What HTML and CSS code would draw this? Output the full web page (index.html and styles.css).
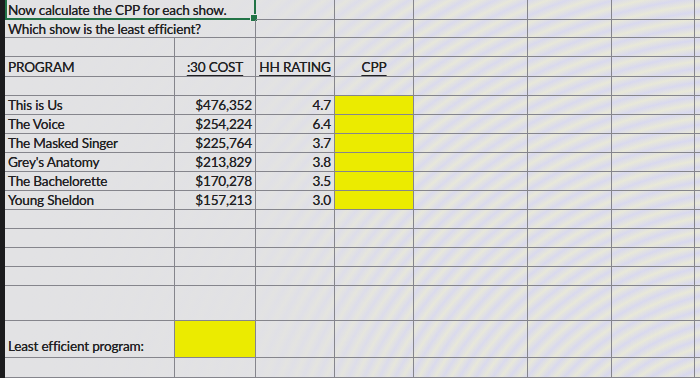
FILE: index.html
```html
<!DOCTYPE html>
<html>
<head>
<meta charset="utf-8">
<link rel="stylesheet" href="styles.css">
</head>
<body>
<div class="screen">
  <div class="edge"></div>
  <div class="sheet">
    <div class="row r1">
      <div class="span2 sel">Now calculate the CPP for each show.<span class="handle"></span></div>
      <div></div><div></div><div></div><div></div><div></div><div></div>
    </div>
    <div class="row r2">
      <div class="span2">Which show is the least efficient?</div>
      <div></div><div></div><div></div><div></div><div></div><div></div>
    </div>
    <div class="row r3"><div></div><div></div><div></div><div></div><div></div><div></div><div></div><div></div></div>
    <div class="row r4 head">
      <div>PROGRAM</div>
      <div class="ctr"><u>:30 COST</u></div>
      <div class="ctr"><u>HH RATING</u></div>
      <div class="ctr"><u>CPP</u></div>
      <div></div><div></div><div></div><div></div>
    </div>
    <div class="row r5"><div></div><div></div><div></div><div></div><div></div><div></div><div></div><div></div></div>
    <div class="row data"><div>This is Us</div><div class="num">$476,352</div><div class="num">4.7</div><div class="yel"></div><div></div><div></div><div></div><div></div></div>
    <div class="row data"><div>The Voice</div><div class="num">$254,224</div><div class="num">6.4</div><div class="yel"></div><div></div><div></div><div></div><div></div></div>
    <div class="row data"><div>The Masked Singer</div><div class="num">$225,764</div><div class="num">3.7</div><div class="yel"></div><div></div><div></div><div></div><div></div></div>
    <div class="row data"><div>Grey's Anatomy</div><div class="num">$213,829</div><div class="num">3.8</div><div class="yel"></div><div></div><div></div><div></div><div></div></div>
    <div class="row data"><div>The Bachelorette</div><div class="num">$170,278</div><div class="num">3.5</div><div class="yel"></div><div></div><div></div><div></div><div></div></div>
    <div class="row data"><div>Young Sheldon</div><div class="num">$157,213</div><div class="num">3.0</div><div class="yel"></div><div></div><div></div><div></div><div></div></div>
    <div class="row"><div></div><div></div><div></div><div></div><div></div><div></div><div></div><div></div></div>
    <div class="row"><div></div><div></div><div></div><div></div><div></div><div></div><div></div><div></div></div>
    <div class="row"><div></div><div></div><div></div><div></div><div></div><div></div><div></div><div></div></div>
    <div class="row"><div></div><div></div><div></div><div></div><div></div><div></div><div></div><div></div></div>
    <div class="row tall1"><div></div><div></div><div></div><div></div><div></div><div></div><div></div><div></div></div>
    <div class="row tall2"><div>Least efficient program:</div><div class="yel"></div><div></div><div></div><div></div><div></div><div></div><div></div></div>
    <div class="row last"><div></div><div></div><div></div><div></div><div></div><div></div><div></div><div></div></div>
  </div>
</div>
</body>
</html>
```
FILE: styles.css
```css
html, body {
  margin: 0;
  padding: 0;
  width: 700px;
  height: 378px;
  overflow: hidden;
}
body {
  font-family: Lato, "Open Sans", sans-serif;
  font-size: 13.6px;
  letter-spacing: -0.2px;
  color: #1f1f22;
  text-shadow: 0 0 0.4px rgba(20,20,24,0.8);
  background-color: #e2e2e4;
  background-image:
    linear-gradient(90deg, rgba(226,226,228,1) 0px, rgba(226,226,228,0.95) 250px, rgba(226,226,228,0.35) 420px, rgba(226,226,228,0.2) 700px),
    repeating-radial-gradient(circle at 110% 150%, #d6d6f2 0, #eaead4 7px, #d6d6f2 14px);
}
.screen {
  display: flex;
  height: 378px;
}
.edge {
  width: 5px;
  flex: none;
  background: #1b1b1d;
}
.sheet {
  flex: 1;
  display: flex;
  flex-direction: column;
}
.row {
  display: grid;
  grid-template-columns: 170px 81px 79px 79px 114px 84px 83px 1fr;
  height: 19px;
  flex: none;
}
.row > div {
  box-sizing: border-box;
  border-right: 1px solid #85858c;
  border-bottom: 1px solid #85858c;
  padding: 0 3px 1px 3px;
  display: flex;
  align-items: flex-end;
  white-space: nowrap;
  line-height: 16px;
  position: relative;
}
.r1 { height: 20px; }
.r2 { height: 18px; }
.r3 { height: 19px; }
.r4 { height: 20px; }
.r5 { height: 19px; }
.tall1 { height: 35px; }
.tall2 { height: 37px; }
.last { height: 20px; }
.span2 { grid-column: span 2; }
.sel {
  border: 2px solid #217346 !important;
  border-top: none !important;
  align-items: center !important;
  padding: 1px 0 0 1px !important;
}
.r2 .span2 { align-items: center; padding-bottom: 0; }
.handle {
  position: absolute;
  right: -4px;
  bottom: -4px;
  width: 6px;
  height: 6px;
  background: #217346;
  border: 1px solid #e8e8e8;
}
.head > div { align-items: center; padding-bottom: 0; }
.ctr { justify-content: center; }
.head u { text-underline-offset: 3px; text-decoration-thickness: 1px; }
.num { justify-content: flex-end; }
.yel { background: #ebeb00; }
.tall2 > div { padding-bottom: 3px; }
```
